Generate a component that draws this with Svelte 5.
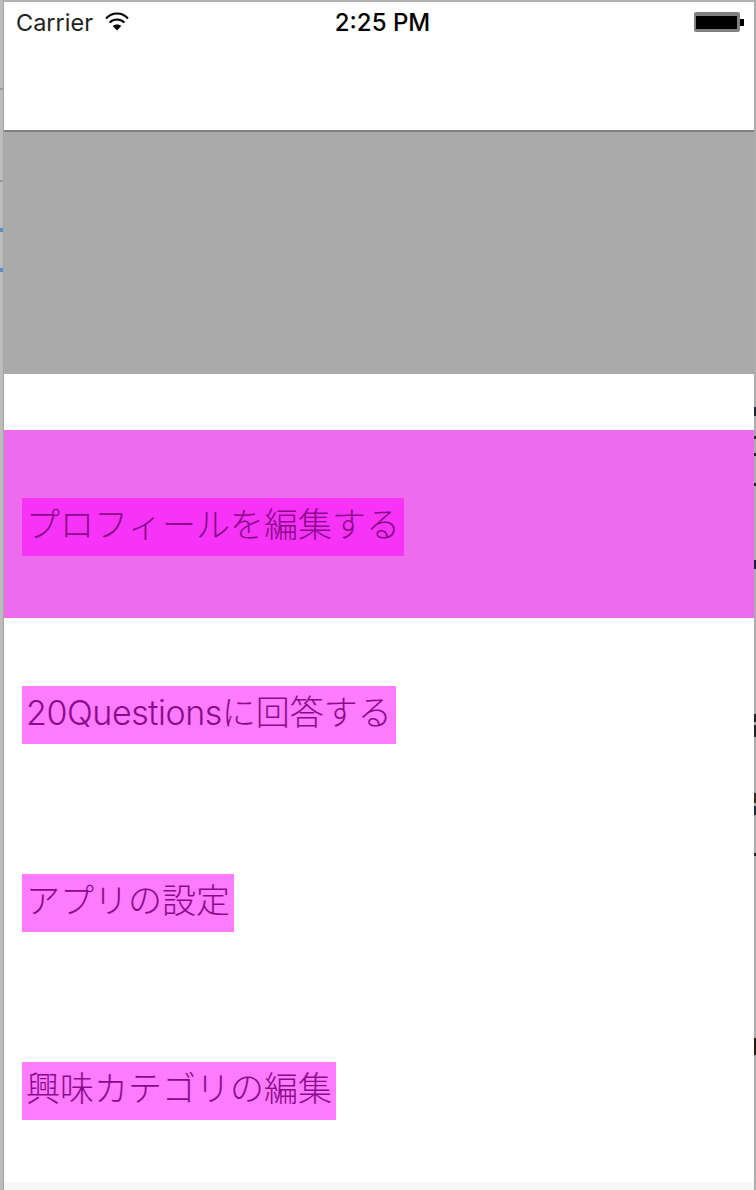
<script>
  const rows = [
    { latin: '', text: 'プロフィールを編集する', active: true },
    { latin: '20Questions', text: 'に回答する', active: false },
    { latin: '', text: 'アプリの設定', active: false },
    { latin: '', text: '興味カテゴリの編集', active: false }
  ];
  const leftMarks = [
    { y: 88, h: 2, c: '#9a9a9a' },
    { y: 180, h: 2, c: '#999999' },
    { y: 228, h: 4, c: '#5b8fc0' },
    { y: 268, h: 4, c: '#5b8fc0' }
  ];
  const rightMarks = [
    { y: 407, h: 9, c: '#1a2430' },
    { y: 436, h: 3, c: '#222' },
    { y: 453, h: 3, c: '#222' },
    { y: 483, h: 3, c: '#222' },
    { y: 560, h: 9, c: '#1a2030' },
    { y: 714, h: 8, c: '#222' },
    { y: 725, h: 12, c: '#222' },
    { y: 793, h: 10, c: '#3a2a1a' },
    { y: 806, h: 9, c: '#1a2a40' },
    { y: 853, h: 3, c: '#222' },
    { y: 1038, h: 17, c: '#2a1a10' }
  ];
</script>

<div class="frame">
  <div class="strip left">
    {#each leftMarks as m}
      <i class="mark" style="top:{m.y}px;height:{m.h}px;background:{m.c}"></i>
    {/each}
  </div>
  <main>
    <header class="status">
      <div class="carrier">
        <span>Carrier</span>
        <svg class="wifi" width="24" height="19" viewBox="0 0 24 19" aria-hidden="true">
          <path d="M1 6.5C7-.2 17-.2 23 6.5" fill="none" stroke="#000" stroke-width="2"/>
          <path d="M4.6 10.6c4.2-4 10.6-4 14.8 0" fill="none" stroke="#000" stroke-width="2"/>
          <path d="M7.8 14c2.4-2 6-2 8.4 0L12 18.5z" fill="#000"/>
        </svg>
      </div>
      <div class="time">2:25 PM</div>
      <div class="battery"><span class="cell"></span><span class="nub"></span></div>
    </header>
    <div class="navbar"></div>
    <div class="banner"></div>
    <div class="spacer"></div>
    {#each rows as r}
      <div class="row" class:active={r.active}>
        <span class="label">{#if r.latin}<span class="latin">{r.latin}</span>{/if}{r.text}</span>
      </div>
    {/each}
    <div class="foot"></div>
  </main>
  <div class="strip right">
    {#each rightMarks as m}
      <i class="mark" style="top:{m.y}px;height:{m.h}px;background:{m.c}"></i>
    {/each}
  </div>
</div>

<style>
  :global(body) { margin: 0; background: #fff; }
  .frame {
    display: flex;
    width: 756px;
    height: 1190px;
    overflow: hidden;
    background: #b0b0b0;
    font-family: "Inter", "Liberation Sans", sans-serif;
  }
  .strip { position: relative; flex: none; height: 100%; box-sizing: border-box; }
  .strip.left { width: 4px; background: #bcbcbc; border-right: 1px solid #a4a4a4; }
  .strip.right { width: 2px; background: #acacac; }
  .mark { position: absolute; left: 0; width: 100%; }
  main {
    flex: 1;
    min-width: 0;
    margin-top: 2px;
    display: flex;
    flex-direction: column;
    background: #fff;
  }
  .status {
    height: 40px;
    padding: 0 10px 2px 12px;
    flex: none;
    display: grid;
    grid-template-columns: 1fr auto 1fr;
    align-items: center;
    color: #000;
  }
  .carrier {
    display: flex;
    align-items: center;
    gap: 12px;
    font-size: 23.5px;
    color: #222;
  }
  .wifi { margin-top: -1px; }
  .time { font-size: 24px; font-weight: 500; margin-left: 5px; white-space: nowrap; }
  .battery { justify-self: end; display: flex; align-items: center; }
  .cell {
    box-sizing: border-box;
    width: 46px;
    height: 20px;
    background: #000;
    border-style: solid;
    border-color: #808080;
    border-width: 4px 3px 3px 2px;
    border-radius: 2px;
  }
  .nub { width: 4px; height: 7px; background: #000; }
  .navbar { height: 86px; flex: none; background: #fff; }
  .banner {
    height: 242px;
    flex: none;
    background: #aaaaaa;
    border-top: 2px solid #7f7f7f;
  }
  .spacer { height: 56px; flex: none; }
  .row {
    height: 188px;
    flex: none;
    box-sizing: border-box;
    padding: 68px 0 0 18px;
    background: #fff;
  }
  .label {
    display: inline-block;
    height: 58px;
    line-height: 54px;
    padding: 0 4px;
    font-family: "Inter", "Noto Sans CJK JP", sans-serif;
    font-size: 34px;
    font-weight: 300;
    font-kerning: none;
    white-space: nowrap;
    color: #8a0a8c;
    background: #ff7bff;
  }
  .latin { letter-spacing: -0.45px; font-kerning: normal; }
  .row.active { background: #ed6ced; }
  .row.active .label { background: #f733f7; }
  .foot { flex: 1; background: #f7f7f7; }
</style>
